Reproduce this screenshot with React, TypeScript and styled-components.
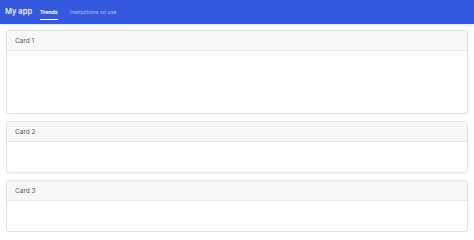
import React from 'react';
import styled, { createGlobalStyle } from 'styled-components';

const GlobalStyle = createGlobalStyle`
  html, body {
    margin: 0;
    padding: 0;
    background: #ffffff;
    font-family: Inter, 'Noto Sans', sans-serif;
  }
`;

const tabs = ['Trends', 'Instructions on use'];

const cards: [string, number][] = [
  ['Card 1', 62],
  ['Card 2', 30],
  ['Card 3', 30],
];

const Header = styled.header`
  display: flex;
  align-items: center;
  height: 24px;
  padding: 0 5px;
  gap: 8px;
  background: #3558e0;
  box-shadow: 0 1px 2px rgba(0, 0, 0, 0.15);
`;

const Brand = styled.div`
  color: #ffffff;
  font-size: 7.6px;
  font-weight: 500;
  line-height: 24px;
`;

const Tabs = styled.nav`
  display: flex;
  gap: 12px;
  height: 100%;
`;

const Tab = styled.div<{ $active?: boolean }>`
  display: flex;
  align-items: center;
  height: 100%;
  font-size: 5.2px;
  font-weight: ${(p) => (p.$active ? 700 : 400)};
  color: ${(p) => (p.$active ? '#ffffff' : 'rgba(255, 255, 255, 0.65)')};
  position: relative;

  &::after {
    content: '';
    display: ${(p) => (p.$active ? 'block' : 'none')};
    position: absolute;
    left: 0;
    right: 0;
    bottom: 4px;
    height: 1.5px;
    border-radius: 1px;
    background: #ffffff;
  }
`;

const Main = styled.main`
  display: flex;
  flex-direction: column;
  gap: 7px;
  padding: 6px 6px 0;
`;

const Card = styled.section`
  border: 1px solid #e2e2e2;
  border-radius: 3px;
  overflow: hidden;
  background: #ffffff;
  box-shadow: 0 1px 1px rgba(0, 0, 0, 0.04);
`;

const CardHead = styled.div`
  height: 19px;
  display: flex;
  align-items: center;
  padding: 0 8px;
  background: #f7f7f7;
  border-bottom: 1px solid #e6e6e6;
  font-size: 6.5px;
  color: #555555;
`;

const CardBody = styled.div<{ $h: number }>`
  height: ${(p) => p.$h}px;
`;

export default function App() {
  return (
    <>
      <GlobalStyle />
      <Header>
        <Brand>My app</Brand>
        <Tabs>
          {tabs.map((t, i) => (
            <Tab key={t} $active={i === 0}>
              {t}
            </Tab>
          ))}
        </Tabs>
      </Header>
      <Main>
        {cards.map(([title, h]) => (
          <Card key={title}>
            <CardHead>{title}</CardHead>
            <CardBody $h={h} />
          </Card>
        ))}
      </Main>
    </>
  );
}
